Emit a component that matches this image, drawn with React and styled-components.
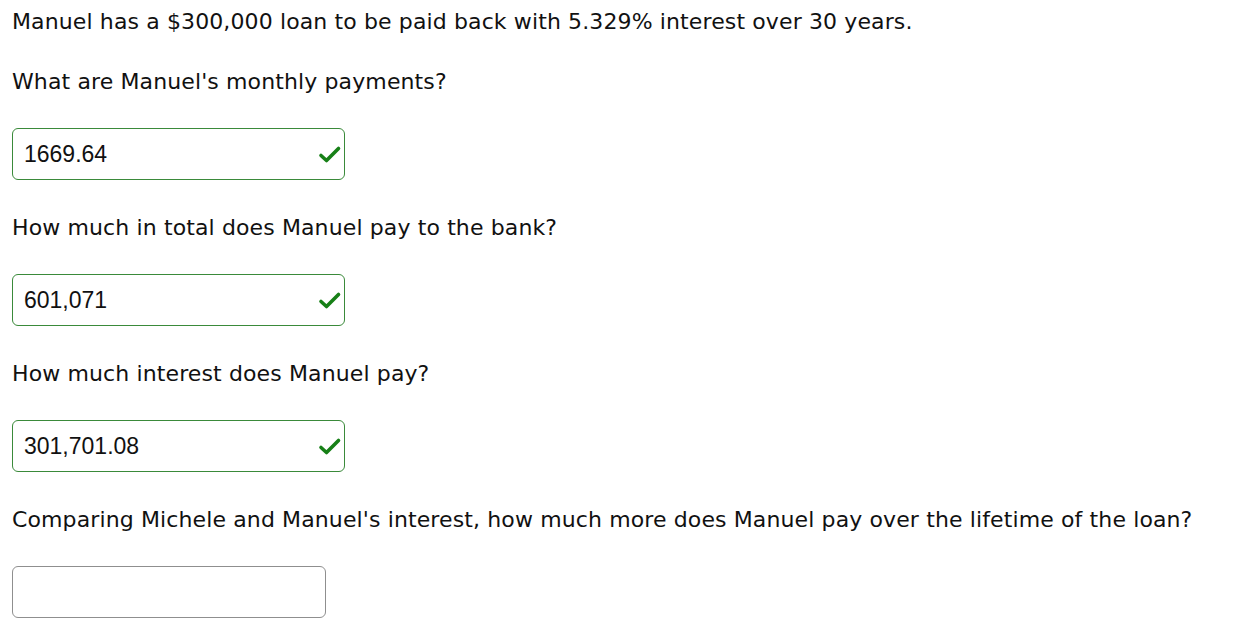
import React from 'react'
import styled, { createGlobalStyle } from 'styled-components'

const GlobalStyle = createGlobalStyle`
body {
    margin: 0;
    background: #fff;
    color: #111;
    font-family: "DejaVu Sans", "Noto Sans", sans-serif;
}
`

const questions = [
    { text: "What are Manuel's monthly payments?", value: '1669.64', correct: true },
    { text: 'How much in total does Manuel pay to the bank?', value: '601,071', correct: true },
    { text: 'How much interest does Manuel pay?', value: '301,701.08', correct: true },
    { text: "Comparing Michele and Manuel's interest, how much more does Manuel pay over the lifetime of the loan?", value: '', correct: false },
]

const Check = () => (
    <svg width="24" height="20" viewBox="0 0 24 20">
        <path d="M3 10.5 L8.5 15.5 L20.5 3.5" fill="none" stroke="#178017" strokeWidth="3.6" strokeLinecap="round" strokeLinejoin="round" />
    </svg>
)

const App = () => {
    return (
        <>
            <GlobalStyle />
            <Page>
                <Intro>Manuel has a $300,000 loan to be paid back with 5.329% interest over 30 years.</Intro>
                {questions.map((q) => (
                    <Block key={q.text}>
                        <Question>{q.text}</Question>
                        <Field $correct={q.correct}>
                            <Value>{q.value}</Value>
                            {q.correct && <Check />}
                        </Field>
                    </Block>
                ))}
            </Page>
        </>
    )
}

export default App

const Page = styled.div`
display: flex;
flex-direction: column;
gap: 35px;
padding: 9px 12px;
`
const Block = styled.div`
display: flex;
flex-direction: column;
gap: 33px;
`
const Question = styled.p`
margin: 0;
font-size: 22px;
line-height: 26px;
letter-spacing: 0.12px;
white-space: nowrap;
`
const Intro = styled(Question)`
margin-bottom: -1px;
`
const Field = styled.div`
box-sizing: border-box;
width: ${(p) => (p.$correct ? '333px' : '314px')};
height: 52px;
display: flex;
align-items: center;
justify-content: space-between;
padding: 0 2px 0 11px;
border: 1px solid ${(p) => (p.$correct ? '#3a8a3a' : '#8f8f8f')};
border-radius: 6px;
svg {
    margin-top: 2px;
}
`
const Value = styled.span`
font-family: "Liberation Sans", Arial, sans-serif;
font-size: 23px;
color: #111;
`
